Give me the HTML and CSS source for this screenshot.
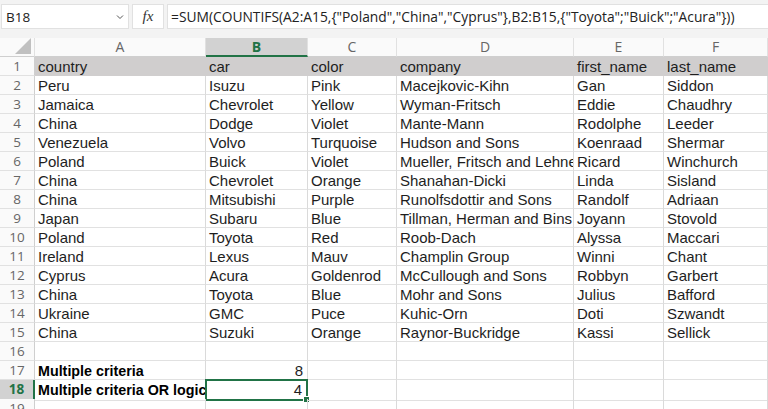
FILE: index.html
```html
<!DOCTYPE html>
<html>
<head>
<meta charset="utf-8">
<link rel="stylesheet" href="styles.css">
</head>
<body>
<div class="app">
  <div class="topbar">
    <div class="namebox"><span>B18</span><svg class="chev" width="8" height="6" viewBox="0 0 8 6"><path d="M1 1.5 L4 4.5 L7 1.5" fill="none" stroke="#555" stroke-width="1"/></svg></div>
    <div class="fxbox"><span class="fx">fx</span></div>
    <div class="formula">=SUM(COUNTIFS(A2:A15,{"Poland","China","Cyprus"},B2:B15,{"Toyota";"Buick";"Acura"}))</div>
  </div>
  <div class="sheet">
    <div class="row head">
      <div class="corner"><svg width="16" height="16" viewBox="0 0 16 16"><path d="M16 0 L16 16 L0 16 Z" fill="#c0c0c0"/></svg></div>
      <div class="ch">A</div><div class="ch sel">B</div><div class="ch">C</div><div class="ch">D</div><div class="ch">E</div><div class="ch">F</div>
    </div>
    <div class="row r1"><div class="rh">1</div><div class="c">country</div><div class="c">car</div><div class="c">color</div><div class="c">company</div><div class="c">first_name</div><div class="c">last_name</div></div>
    <div class="row"><div class="rh">2</div><div class="c">Peru</div><div class="c">Isuzu</div><div class="c">Pink</div><div class="c">Macejkovic-Kihn</div><div class="c">Gan</div><div class="c">Siddon</div></div>
    <div class="row"><div class="rh">3</div><div class="c">Jamaica</div><div class="c">Chevrolet</div><div class="c">Yellow</div><div class="c">Wyman-Fritsch</div><div class="c">Eddie</div><div class="c">Chaudhry</div></div>
    <div class="row"><div class="rh">4</div><div class="c">China</div><div class="c">Dodge</div><div class="c">Violet</div><div class="c">Mante-Mann</div><div class="c">Rodolphe</div><div class="c">Leeder</div></div>
    <div class="row"><div class="rh">5</div><div class="c">Venezuela</div><div class="c">Volvo</div><div class="c">Turquoise</div><div class="c">Hudson and Sons</div><div class="c">Koenraad</div><div class="c">Shermar</div></div>
    <div class="row"><div class="rh">6</div><div class="c">Poland</div><div class="c">Buick</div><div class="c">Violet</div><div class="c">Mueller, Fritsch and Lehner</div><div class="c">Ricard</div><div class="c">Winchurch</div></div>
    <div class="row"><div class="rh">7</div><div class="c">China</div><div class="c">Chevrolet</div><div class="c">Orange</div><div class="c">Shanahan-Dicki</div><div class="c">Linda</div><div class="c">Sisland</div></div>
    <div class="row"><div class="rh">8</div><div class="c">China</div><div class="c">Mitsubishi</div><div class="c">Purple</div><div class="c">Runolfsdottir and Sons</div><div class="c">Randolf</div><div class="c">Adriaan</div></div>
    <div class="row"><div class="rh">9</div><div class="c">Japan</div><div class="c">Subaru</div><div class="c">Blue</div><div class="c">Tillman, Herman and Bins</div><div class="c">Joyann</div><div class="c">Stovold</div></div>
    <div class="row"><div class="rh">10</div><div class="c">Poland</div><div class="c">Toyota</div><div class="c">Red</div><div class="c">Roob-Dach</div><div class="c">Alyssa</div><div class="c">Maccari</div></div>
    <div class="row"><div class="rh">11</div><div class="c">Ireland</div><div class="c">Lexus</div><div class="c">Mauv</div><div class="c">Champlin Group</div><div class="c">Winni</div><div class="c">Chant</div></div>
    <div class="row"><div class="rh">12</div><div class="c">Cyprus</div><div class="c">Acura</div><div class="c">Goldenrod</div><div class="c">McCullough and Sons</div><div class="c">Robbyn</div><div class="c">Garbert</div></div>
    <div class="row"><div class="rh">13</div><div class="c">China</div><div class="c">Toyota</div><div class="c">Blue</div><div class="c">Mohr and Sons</div><div class="c">Julius</div><div class="c">Bafford</div></div>
    <div class="row"><div class="rh">14</div><div class="c">Ukraine</div><div class="c">GMC</div><div class="c">Puce</div><div class="c">Kuhic-Orn</div><div class="c">Doti</div><div class="c">Szwandt</div></div>
    <div class="row"><div class="rh">15</div><div class="c">China</div><div class="c">Suzuki</div><div class="c">Orange</div><div class="c">Raynor-Buckridge</div><div class="c">Kassi</div><div class="c">Sellick</div></div>
    <div class="row"><div class="rh">16</div><div class="c"></div><div class="c"></div><div class="c"></div><div class="c"></div><div class="c"></div><div class="c"></div></div>
    <div class="row"><div class="rh">17</div><div class="c b">Multiple criteria</div><div class="c num">8</div><div class="c"></div><div class="c"></div><div class="c"></div><div class="c"></div></div>
    <div class="row"><div class="rh selr">18</div><div class="c b">Multiple criteria OR logic</div><div class="c num active">4<span class="handle"></span></div><div class="c"></div><div class="c"></div><div class="c"></div><div class="c"></div></div>
    <div class="row"><div class="rh">19</div><div class="c"></div><div class="c"></div><div class="c"></div><div class="c"></div><div class="c"></div><div class="c"></div></div>
  </div>
</div>
</body>
</html>
```
FILE: styles.css
```css
html, body {
  margin: 0;
  padding: 0;
  background: #ffffff;
  overflow: hidden;
}
.app {
  width: 768px;
  height: 409px;
  overflow: hidden;
}
.topbar {
  height: 38px;
  background: #f3f3f3;
  display: flex;
  align-items: flex-start;
  padding-top: 4px;
  box-sizing: border-box;
  gap: 3px;
}
.namebox {
  width: 128px;
  height: 25px;
  margin-left: 1px;
  background: #fff;
  border: 1px solid #e1e1e1;
  box-sizing: border-box;
  display: flex;
  align-items: center;
  justify-content: space-between;
  padding: 0 4px 0 4px;
  font-family: "Open Sans", "Noto Sans", sans-serif;
  font-size: 13.5px;
  color: #222;
}
.fxbox {
  width: 32px;
  height: 25px;
  background: #fff;
  border: 1px solid #e1e1e1;
  box-sizing: border-box;
  display: flex;
  align-items: center;
  justify-content: center;
}
.fx {
  font-family: "Liberation Serif", "DejaVu Serif", serif;
  font-style: italic;
  font-size: 15px;
  color: #333;
}
.formula {
  flex: 1;
  height: 25px;
  background: #fff;
  border: 1px solid #e1e1e1;
  border-right: none;
  box-sizing: border-box;
  padding-left: 3px;
  font-family: "Open Sans", "Noto Sans", sans-serif;
  font-size: 13.8px;
  line-height: 23px;
  color: #222;
  white-space: nowrap;
  overflow: hidden;
}
.sheet {
  display: flex;
  flex-direction: column;
}
.row {
  display: grid;
  grid-template-columns: 35px 171px 102px 89px 177px 90px 104px;
  height: 19px;
}
.row > div {
  box-sizing: border-box;
  border-right: 1px solid #dadada;
  border-bottom: 1px solid #e1e1e1;
  overflow: hidden;
  white-space: nowrap;
  position: relative;
}
.head > div {
  background: #fafafa;
  border-right: 1px solid #e1e1e1;
  border-bottom: 1px solid #cfcfcf;
}
.corner {
  display: flex;
  align-items: flex-end;
  justify-content: flex-end;
  padding: 0 3px 2px 0;
}
.ch {
  font-family: "Open Sans", "Noto Sans", sans-serif;
  font-size: 14px;
  color: #666;
  text-align: center;
  line-height: 18px;
}
.head > .ch.sel {
  background: #d2d2d2;
  color: #217346;
  font-weight: bold;
  border-bottom: 2px solid #217346;
  line-height: 18px;
}
.rh {
  font-family: "Open Sans", "Noto Sans", sans-serif;
  font-size: 13.5px;
  color: #666;
  text-align: center;
  line-height: 19px;
  background: #fafafa;
}
.row > .rh {
  border-right: 1px solid #cfcfcf;
}
.row > .rh.selr {
  background: #d2d2d2;
  color: #217346;
  font-weight: bold;
  border-right: 2px solid #217346;
}
.c {
  font-family: "Liberation Sans", Arial, sans-serif;
  font-size: 15px;
  color: #1e1e1e;
  line-height: 19px;
  padding-left: 3px;
}
.r1 > .c {
  background: #d0cece;
  border-right-color: #d0cece;
  border-bottom-color: #d0cece;
}
.c.b {
  font-weight: bold;
  font-size: 14.3px;
  color: #000;
  line-height: 20px;
}
.c.num {
  text-align: right;
  padding-right: 4px;
}
.row > .c.active {
  border: 2px solid #217346;
  margin-top: -1px;
  margin-left: -1px;
  line-height: 18px;
  overflow: visible;
}
.handle {
  position: absolute;
  right: -4px;
  bottom: -4px;
  width: 5px;
  height: 5px;
  background: #217346;
  border: 1px solid #fff;
}
```
